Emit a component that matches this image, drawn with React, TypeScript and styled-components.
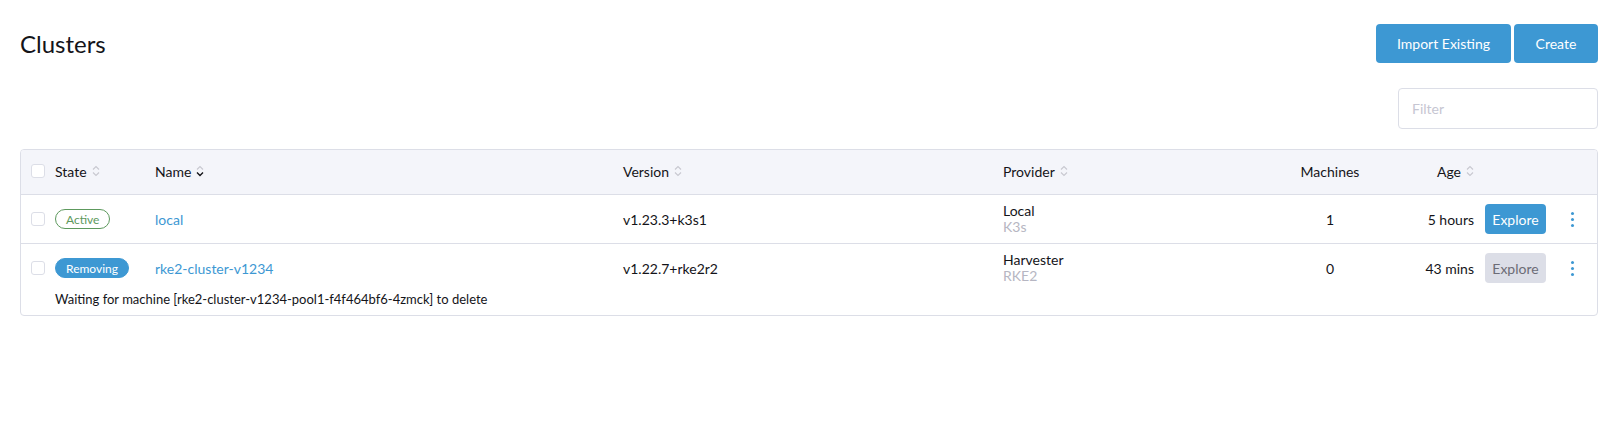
import React from "react";
import styled, { createGlobalStyle, css } from "styled-components";

const GlobalStyle = createGlobalStyle`
  html, body { margin: 0; padding: 0; background: #fff; }
  body { font-family: Lato, "Noto Sans", sans-serif; color: #141419; font-size: 14px; }
  * { box-sizing: border-box; }
`;

const BLUE = "#3d98d3";
const BORDER = "#dcdee7";
const COLS = "34px 100px 468px 380px 267px 120px 90px 75px 1fr";

const Page = styled.div`
  padding: 24px 20px 20px;
`;

const TitleBar = styled.div`
  display: flex;
  align-items: center;
  justify-content: space-between;
  height: 39px;
`;

const Title = styled.h1`
  margin: 0;
  font-size: 24px;
  font-weight: 400;
  line-height: 1;
  color: #141419;
`;

const Actions = styled.div`
  display: flex;
  gap: 3px;
`;

const Button = styled.button<{ $w: number }>`
  height: 39px;
  width: ${(p) => p.$w}px;
  border: none;
  border-radius: 4px;
  background: ${BLUE};
  color: #fff;
  font-family: inherit;
  font-size: 14px;
  padding: 0;
  cursor: pointer;
`;

const FilterRow = styled.div`
  display: flex;
  justify-content: flex-end;
  margin-top: 25px;
`;

const Filter = styled.input`
  width: 200px;
  height: 41px;
  border: 1px solid ${BORDER};
  border-radius: 4px;
  padding: 0 13px;
  font-family: inherit;
  font-size: 14px;
  color: #141419;
  outline: none;
  &::placeholder { color: #c6c6d2; }
`;

const Table = styled.div`
  margin-top: 20px;
  border: 1px solid ${BORDER};
  border-radius: 4px;
  overflow: hidden;
`;

const HeaderRow = styled.div`
  display: grid;
  grid-template-columns: ${COLS};
  height: 45px;
  padding-bottom: 2px;
  background: #f4f5fa;
  border-bottom: 1px solid ${BORDER};
  align-items: center;
`;

const Row = styled.div<{ $last?: boolean }>`
  ${(p) =>
    !p.$last &&
    css`
      border-bottom: 1px solid ${BORDER};
    `}
`;

const MainLine = styled.div`
  display: grid;
  grid-template-columns: ${COLS};
  height: 48px;
  align-items: center;
`;

const SubLine = styled.div`
  display: grid;
  grid-template-columns: ${COLS};
  line-height: 14px;
  padding-bottom: 9px;
  font-size: 13px;
  color: #141419;
`;

const SubText = styled.div`
  grid-column: 2 / -1;
`;

const Cell = styled.div<{ $align?: "left" | "center" | "right"; $pl?: number; $pr?: number }>`
  display: flex;
  align-items: center;
  justify-content: ${(p) =>
    p.$align === "center" ? "center" : p.$align === "right" ? "flex-end" : "flex-start"};
  padding-left: ${(p) => p.$pl ?? 0}px;
  padding-right: ${(p) => p.$pr ?? 0}px;
  white-space: nowrap;
`;

const HeadLabel = styled.span`
  display: inline-flex;
  align-items: center;
  gap: 5px;
  color: #141419;
`;

const Check = styled.span`
  display: inline-block;
  width: 14px;
  height: 14px;
  border: 1px solid ${BORDER};
  border-radius: 3px;
  background: #fff;
`;

const Badge = styled.span<{ $variant: "active" | "removing" }>`
  display: inline-flex;
  align-items: center;
  height: 20px;
  padding: 0 10px;
  border-radius: 10px;
  font-size: 12px;
  ${(p) =>
    p.$variant === "active"
      ? css`
          border: 1px solid #5d995d;
          color: #5d995d;
          background: #fff;
        `
      : css`
          border: 1px solid ${BLUE};
          color: #fff;
          background: ${BLUE};
        `}
`;

const Link = styled.a`
  color: ${BLUE};
  text-decoration: none;
`;

const Stack = styled.div`
  display: flex;
  flex-direction: column;
  line-height: 16px;
`;

const Muted = styled.span`
  color: #b6b6c2;
`;

const Explore = styled.button<{ $disabled?: boolean }>`
  height: 30px;
  width: 61px;
  border: none;
  border-radius: 4px;
  font-family: inherit;
  font-size: 14px;
  padding: 0;
  background: ${(p) => (p.$disabled ? BORDER : BLUE)};
  color: ${(p) => (p.$disabled ? "#6c6c76" : "#fff")};
`;

const Dots = styled.span`
  display: inline-flex;
  flex-direction: column;
  gap: 3px;
  & > i {
    display: block;
    width: 3px;
    height: 3px;
    border-radius: 50%;
    background: ${BLUE};
  }
`;

function SortIcon({ active }: { active?: boolean }) {
  return (
    <svg width="8" height="12" viewBox="0 0 8 12" fill="none">
      <path d="M1 4.5 L4 1.5 L7 4.5" stroke="#c8c8d0" strokeWidth="1.1" />
      <path
        d="M1 7.5 L4 10.5 L7 7.5"
        stroke={active ? "#141419" : "#c8c8d0"}
        strokeWidth={active ? 1.4 : 1.1}
      />
    </svg>
  );
}

function Menu() {
  return (
    <Dots>
      <i />
      <i />
      <i />
    </Dots>
  );
}

type Cluster = {
  state: "active" | "removing";
  name: string;
  version: string;
  provider: string;
  distro: string;
  machines: number;
  age: string;
  canExplore: boolean;
  message?: string;
};

const clusters: Cluster[] = [
  {
    state: "active",
    name: "local",
    version: "v1.23.3+k3s1",
    provider: "Local",
    distro: "K3s",
    machines: 1,
    age: "5 hours",
    canExplore: true,
  },
  {
    state: "removing",
    name: "rke2-cluster-v1234",
    version: "v1.22.7+rke2r2",
    provider: "Harvester",
    distro: "RKE2",
    machines: 0,
    age: "43 mins",
    canExplore: false,
    message: "Waiting for machine [rke2-cluster-v1234-pool1-f4f464bf6-4zmck] to delete",
  },
];

export default function App() {
  return (
    <>
      <GlobalStyle />
      <Page>
        <TitleBar>
          <Title>Clusters</Title>
          <Actions>
            <Button $w={135}>Import Existing</Button>
            <Button $w={84}>Create</Button>
          </Actions>
        </TitleBar>
        <FilterRow>
          <Filter placeholder="Filter" />
        </FilterRow>
        <Table>
          <HeaderRow>
            <Cell $pl={10}>
              <Check />
            </Cell>
            <Cell>
              <HeadLabel>
                State <SortIcon />
              </HeadLabel>
            </Cell>
            <Cell>
              <HeadLabel>
                Name <SortIcon active />
              </HeadLabel>
            </Cell>
            <Cell>
              <HeadLabel>
                Version <SortIcon />
              </HeadLabel>
            </Cell>
            <Cell>
              <HeadLabel>
                Provider <SortIcon />
              </HeadLabel>
            </Cell>
            <Cell $align="center">
              <HeadLabel>Machines</HeadLabel>
            </Cell>
            <Cell $align="right" $pr={6}>
              <HeadLabel>
                Age <SortIcon />
              </HeadLabel>
            </Cell>
            <Cell />
            <Cell />
          </HeaderRow>
          {clusters.map((c, i) => (
            <Row key={c.name} $last={i === clusters.length - 1}>
              <MainLine>
                <Cell $pl={10}>
                  <Check />
                </Cell>
                <Cell>
                  <Badge $variant={c.state}>{c.state === "active" ? "Active" : "Removing"}</Badge>
                </Cell>
                <Cell>
                  <Link href="#">{c.name}</Link>
                </Cell>
                <Cell>{c.version}</Cell>
                <Cell>
                  <Stack>
                    <span>{c.provider}</span>
                    <Muted>{c.distro}</Muted>
                  </Stack>
                </Cell>
                <Cell $align="center">{c.machines}</Cell>
                <Cell $align="right" $pr={6}>
                  {c.age}
                </Cell>
                <Cell $pl={5}>
                  <Explore $disabled={!c.canExplore}>Explore</Explore>
                </Cell>
                <Cell $pl={16}>
                  <Menu />
                </Cell>
              </MainLine>
              {c.message && (
                <SubLine>
                  <SubText>{c.message}</SubText>
                </SubLine>
              )}
            </Row>
          ))}
        </Table>
      </Page>
    </>
  );
}
